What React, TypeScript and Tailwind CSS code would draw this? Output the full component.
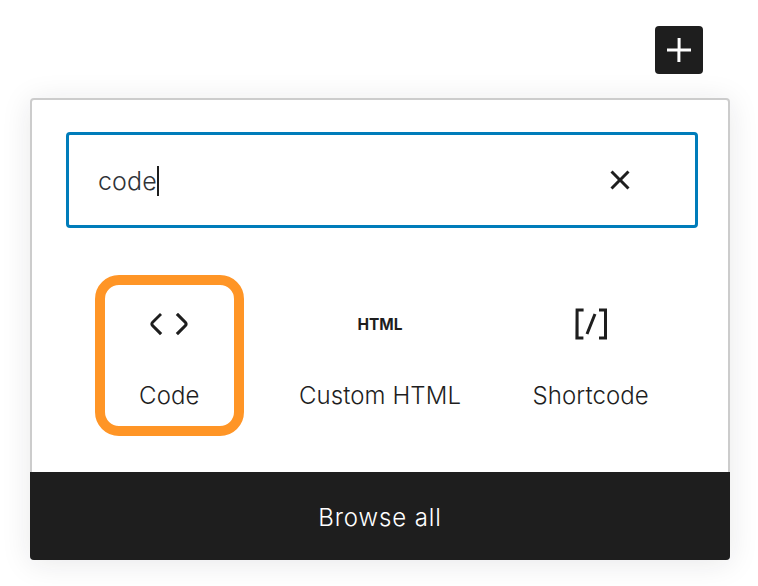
import React from "react";

const blocks = [
  { label: "Code", selected: true },
  { label: "Custom HTML", selected: false },
  { label: "Shortcode", selected: false },
];

const BlockIcon = ({ label }: { label: string }) => {
  if (label === "Custom HTML") {
    return <span className="pt-[1px] text-[15.5px] leading-none font-bold text-[#1e1e1e]">HTML</span>;
  }
  return (
    <svg viewBox="0 0 24 24" className="h-12 w-12 fill-[#1e1e1e]">
      {label === "Code" ? (
        <path d="M20.8 10.7l-4.3-4.3-1.1 1.1 4.3 4.3c.1.1.1.3 0 .4l-4.3 4.3 1.1 1.1 4.3-4.3c.7-.8.7-1.9 0-2.6zM4.2 11.8l4.3-4.3-1-1-4.3 4.3c-.7.7-.7 1.8 0 2.5l4.3 4.3 1.1-1.1-4.3-4.3c-.2-.1-.2-.3-.1-.4z" />
      ) : (
        <path d="M16 4.2v1.5h2.5v12.5H16v1.5h4V4.2h-4zM4.2 19.8h4v-1.5H5.8V5.8h2.5V4.2h-4l-.1 15.6zm5.1-3.1l1.4.6 4-10-1.4-.6-4 10z" />
      )}
    </svg>
  );
};

export default function App() {
  return (
    <div className="flex h-[586px] w-[758px] flex-col overflow-hidden bg-white pt-[26px] font-['Inter',sans-serif] text-[#1e1e1e]">
      {/* toggle */}
      <div className="flex justify-end pr-[55px]">
        <button className="flex h-12 w-12 items-center justify-center rounded bg-[#1e1e1e]">
          <svg viewBox="0 0 24 24" className="h-12 w-12 fill-white">
            <path d="M18 11.2h-5.2V6h-1.5v5.2H6v1.5h5.2V18h1.5v-5.2H18z" />
          </svg>
        </button>
      </div>

      {/* inserter panel */}
      <div className="ml-[30px] mt-6 flex h-[462px] w-[700px] flex-col rounded border-2 border-[#cccccc] bg-white shadow-[0_3px_30px_rgba(25,30,35,0.1)]">
        <div className="ml-[34px] mr-[30px] mt-8 flex h-24 items-center justify-between rounded border-[3px] border-[#007cba] pl-[29px] pr-[51px]">
          <div className="flex items-center pt-[2px] text-[25px] leading-none font-[350] tracking-[0.1px] text-[#2f3337]">
            code
            <span className="h-[30px] w-[2px] bg-[#1e1e1e]" />
          </div>
          <svg viewBox="0 0 24 24" className="h-12 w-12 fill-[#1e1e1e]">
            <path d="M12 13.06l3.712 3.713 1.061-1.06L13.061 12l3.712-3.712-1.06-1.06L12 10.938 8.288 7.227l-1.061 1.06L10.939 12l-3.712 3.712 1.06 1.061L12 13.061z" />
          </svg>
        </div>

        <div className="mt-[47px] ml-8 grid w-[632px] grid-cols-3">
          {blocks.map((block) => (
            <div key={block.label} className="flex justify-center">
              <div
                className={`flex h-[161px] w-[149px] flex-col items-center rounded-[24px] border-[10px] ${
                  block.selected ? "border-[#ff9526]" : "border-transparent"
                }`}
              >
                <div className="mt-[15px] flex h-12 items-center justify-center">
                  <BlockIcon label={block.label} />
                </div>
                <div className="mt-[28px] whitespace-nowrap text-[24px] leading-[40px] font-[350] tracking-[0.1px] text-[#1e1e1e]">
                  {block.label}
                </div>
              </div>
            </div>
          ))}
        </div>

        <button className="-mx-[2px] -mb-[2px] mt-auto flex h-[88px] items-center justify-center rounded-b bg-[#1e1e1e] pt-[3px] text-[24px] font-[350] tracking-[0.9px] text-white">
          Browse all
        </button>
      </div>
    </div>
  );
}
